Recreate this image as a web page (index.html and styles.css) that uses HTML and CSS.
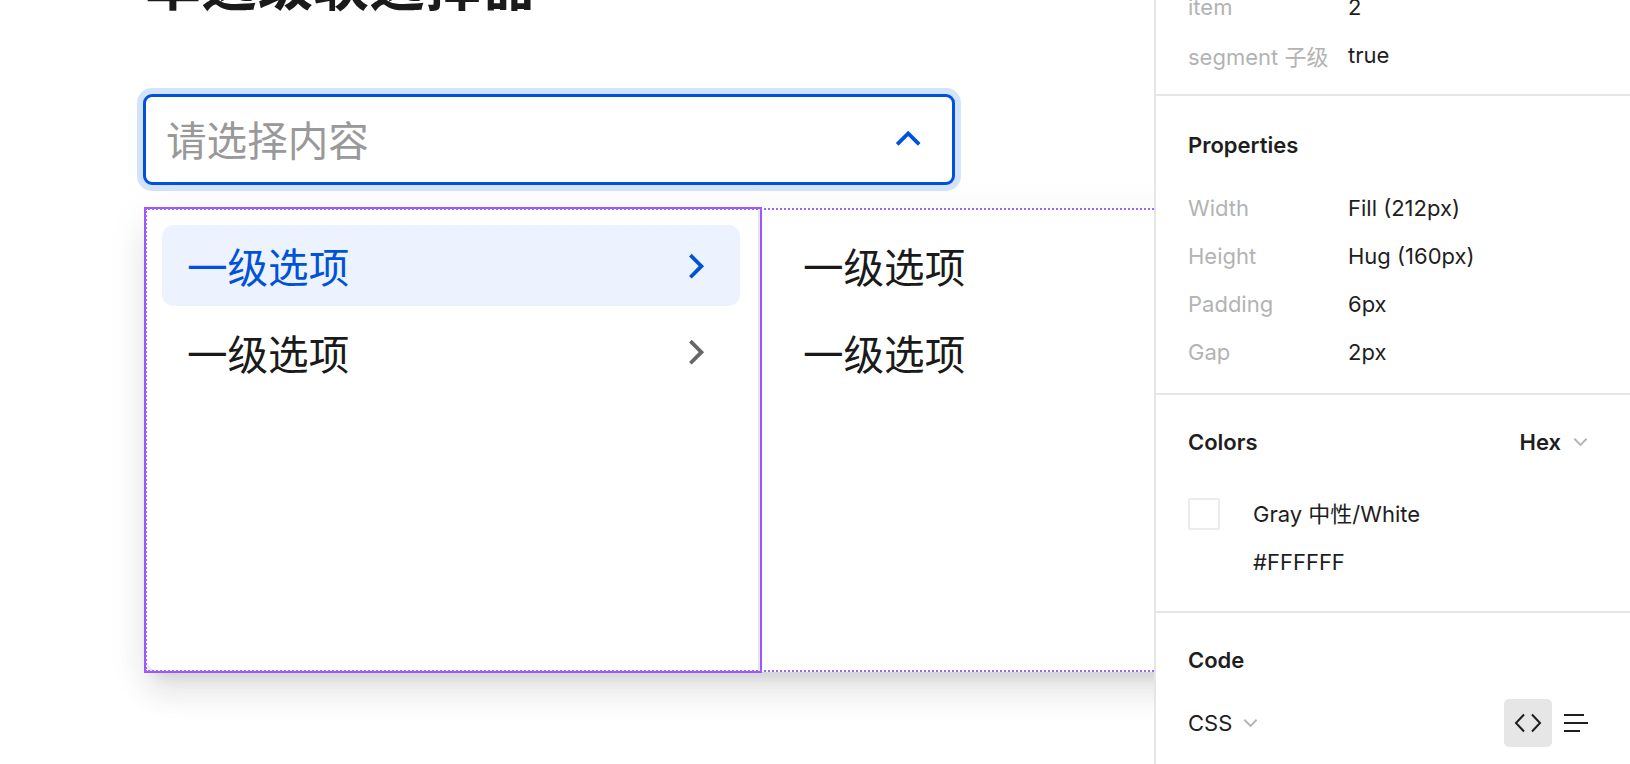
FILE: index.html
```html
<!DOCTYPE html>
<html lang="zh-CN">
<head>
<meta charset="utf-8">
<title>单选级联选择器</title>
<link rel="stylesheet" href="styles.css">
</head>
<body>
<div class="app">
  <main class="canvas">
    <h1 class="title">单选级联选择器</h1>
    <div class="select">
      <span class="placeholder">请选择内容</span>
      <svg class="caret" viewBox="0 0 16 16"><path d="M4.2 9.8 8 6l3.8 3.8"/></svg>
    </div>
    <div class="popup">
      <div class="col col-first">
        <div class="opt opt-active"><span>一级选项</span><svg class="arrow" viewBox="0 0 16 16"><path d="M6 4.2 9.8 8 6 11.8"/></svg></div>
        <div class="opt"><span>一级选项</span><svg class="arrow" viewBox="0 0 16 16"><path d="M6 4.2 9.8 8 6 11.8"/></svg></div>
        <div class="sel-solid"></div>
      </div>
      <div class="col">
        <div class="opt"><span>一级选项</span></div>
        <div class="opt"><span>一级选项</span></div>
      </div>
      <div class="sel-dotted"></div>
    </div>
  </main>
  <aside class="inspector">
    <section class="sec sec-top">
      <div class="row"><span class="lbl">item</span><span class="val">2</span></div>
      <div class="row"><span class="lbl">segment 子级</span><span class="val">true</span></div>
    </section>
    <section class="sec sec-props">
      <h2 class="head">Properties</h2>
      <div class="rows">
        <div class="row"><span class="lbl">Width</span><span class="val">Fill (212px)</span></div>
        <div class="row"><span class="lbl">Height</span><span class="val">Hug (160px)</span></div>
        <div class="row"><span class="lbl">Padding</span><span class="val">6px</span></div>
        <div class="row"><span class="lbl">Gap</span><span class="val">2px</span></div>
      </div>
    </section>
    <section class="sec sec-colors">
      <div class="head head-split">
        <h2 class="head-title">Colors</h2>
        <span class="fmt">Hex<svg class="chev" viewBox="0 0 16 10"><path d="M1.5 1.5 8 8l6.5-6.5"/></svg></span>
      </div>
      <div class="color">
        <span class="swatch"></span>
        <div class="color-info">
          <div class="color-line">Gray 中性/White</div>
          <div class="color-line">#FFFFFF</div>
        </div>
      </div>
    </section>
    <section class="sec sec-code">
      <h2 class="head">Code</h2>
      <div class="code-row">
        <span class="lang">CSS<svg class="chev" viewBox="0 0 16 10"><path d="M1.5 1.5 8 8l6.5-6.5"/></svg></span>
        <span class="tools">
          <span class="tool-btn"><svg class="code-ico" viewBox="0 0 28 20"><path d="M10 1.5 2 10l8 8.5M18 1.5 26 10l-8 8.5"/></svg></span>
          <svg class="lines-ico" viewBox="0 0 24 18"><path d="M0 1h20M0 9h24M0 17h16"/></svg>
        </span>
      </div>
    </section>
  </aside>
</div>
</body>
</html>
```

FILE: styles.css
```css
* { box-sizing: border-box; }

html, body {
  margin: 0;
  padding: 0;
  background: #ffffff;
  overflow: hidden;
}

.app {
  display: flex;
  width: 1630px;
  height: 764px;
  overflow: hidden;
}

/* ---------- canvas ---------- */
.canvas {
  flex: none;
  width: 1154px;
  height: 764px;
  overflow: hidden;
  padding-left: 143px;
  font-family: "Noto Sans CJK SC", "Noto Sans", sans-serif;
}

.title {
  margin: -47px 0 0 2px;
  font-size: 56px;
  line-height: 56px;
  font-weight: 700;
  color: #1a1a1a;
  white-space: nowrap;
}

.select {
  margin-top: 85px;
  width: 812px;
  height: 91px;
  border: 3px solid #0052d9;
  border-radius: 9px;
  box-shadow: 0 0 0 6px #d4e3fc;
  display: flex;
  align-items: center;
  justify-content: space-between;
  padding: 0 21px 0 20px;
  background: #fff;
}

.placeholder {
  font-size: 40.6px;
  line-height: 1;
  color: #999999;
}

.caret {
  width: 46.4px;
  height: 46.4px;
  fill: none;
  stroke: #0052d9;
  stroke-width: 1.3;
}

.popup {
  position: relative;
  margin-top: 23px;
  margin-left: 1.5px;
  width: 1232px;
  height: 464px;
  display: flex;
  background: #ffffff;
  border-radius: 17px;
  box-shadow: 0 9px 40px 6px rgba(0,0,0,0.05), 0 23px 29px 3px rgba(0,0,0,0.06), 0 14px 14px -9px rgba(0,0,0,0.1);
}

.col {
  position: relative;
  flex: none;
  width: 616px;
  height: 100%;
  padding: 17.4px;
  display: flex;
  flex-direction: column;
  gap: 5.8px;
}

.col-first {
  border-right: 3px solid #e7e7e7;
}

.opt {
  flex: none;
  height: 81px;
  padding: 0 21px 0 25px;
  border-radius: 11.6px;
  display: flex;
  align-items: center;
  justify-content: space-between;
  font-size: 40.6px;
  line-height: 64px;
  color: #1a1a1a;
}

.opt-active {
  background: #ecf2fe;
  color: #0052d9;
}

.arrow {
  width: 46.4px;
  height: 46.4px;
  fill: none;
  stroke: #666666;
  stroke-width: 1.3;
}

.opt-active .arrow {
  stroke: #0052d9;
}

.sel-solid {
  position: absolute;
  top: -1px;
  left: -1px;
  bottom: -1px;
  right: -4px;
  border: 2px solid #9d55ff;
  pointer-events: none;
}

.sel-dotted {
  position: absolute;
  inset: 0;
  border: 2px dotted #a062ff;
  pointer-events: none;
}

/* ---------- inspector ---------- */
.inspector {
  flex: 1;
  border-left: 2px solid #e6e6e6;
  background: #ffffff;
  font-family: Inter, "Noto Sans CJK SC", sans-serif;
  font-size: 22px;
  color: #1e1e1e;
}

.sec {
  padding-left: 32px;
  padding-right: 42px;
  border-bottom: 2px solid #e6e6e6;
}

.sec-top {
  margin-top: -17px;
  padding-bottom: 15px;
}

.sec-props {
  padding-top: 25px;
  padding-bottom: 17px;
}

.sec-colors {
  padding-top: 23px;
  padding-bottom: 25px;
}

.sec-code {
  padding-top: 23px;
  border-bottom: none;
}

.row {
  display: flex;
  align-items: center;
  height: 48px;
}

.lbl {
  width: 160px;
  flex: none;
  color: #b3b3b3;
}

.val {
  color: #1e1e1e;
}

.head {
  margin: 0;
  height: 48px;
  line-height: 48px;
  font-size: 22px;
  font-weight: 600;
  color: #1e1e1e;
}

.rows {
  margin-top: 15px;
}

.head-split {
  display: flex;
  align-items: center;
  justify-content: space-between;
}

.head-title {
  margin: 0;
  font-size: 22px;
  font-weight: 600;
}

.fmt {
  display: flex;
  align-items: center;
  gap: 12px;
  font-weight: 600;
}

.chev {
  width: 15px;
  height: 10px;
  fill: none;
  stroke: #b3b3b3;
  stroke-width: 2;
}

.color {
  margin-top: 24px;
  display: flex;
  align-items: flex-start;
}

.swatch {
  flex: none;
  width: 32px;
  height: 32px;
  margin-top: 8px;
  margin-right: 33px;
  border: 2px solid #ebebeb;
  border-radius: 2px;
  background: #ffffff;
}

.color-line {
  height: 48px;
  line-height: 48px;
}

.code-row {
  margin-top: 15px;
  height: 48px;
  display: flex;
  align-items: center;
  justify-content: space-between;
}

.lang {
  display: flex;
  align-items: center;
  gap: 11px;
}

.tools {
  display: flex;
  align-items: center;
  gap: 12px;
}

.tool-btn {
  width: 48px;
  height: 48px;
  border-radius: 5px;
  background: #e6e6e6;
  display: flex;
  align-items: center;
  justify-content: center;
}

.code-ico {
  width: 28px;
  height: 20px;
  fill: none;
  stroke: #1e1e1e;
  stroke-width: 2;
}

.lines-ico {
  width: 24px;
  height: 18px;
  fill: none;
  stroke: #1e1e1e;
  stroke-width: 2;
}
```
